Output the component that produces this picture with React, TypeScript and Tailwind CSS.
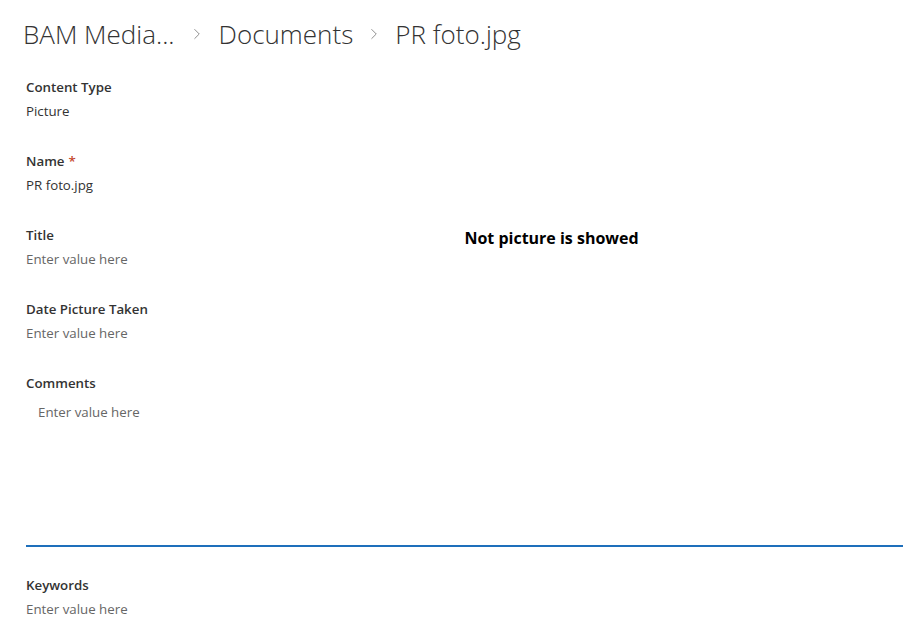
import { ChevronRight } from "lucide-react";

const fields = [
  { label: "Content Type", value: "Picture", placeholder: false },
  { label: "Name", value: "PR foto.jpg", placeholder: false, required: true },
  { label: "Title", value: "Enter value here", placeholder: true },
  { label: "Date Picture Taken", value: "Enter value here", placeholder: true },
];

function Field({
  label,
  value,
  placeholder,
  required,
}: {
  label: string;
  value: string;
  placeholder?: boolean;
  required?: boolean;
}) {
  return (
    <div className="mb-[30px]">
      <div className="text-[13.3px] leading-[20px] font-semibold text-[#333]">
        {label}
        {required && <span className="text-[#c4462a] ml-1">*</span>}
      </div>
      <div
        className={`mt-[4px] text-[13.3px] leading-[20px] ${placeholder ? "text-[#666]" : "text-[#333]"}`}
      >
        {value}
      </div>
    </div>
  );
}

export default function App() {
  return (
    <div className="min-h-[624px] bg-white font-['Open_Sans',sans-serif] text-[#333] overflow-hidden">
      {/* Breadcrumb */}
      <div className="flex items-center pl-[23px] pt-[14px] h-[54px] text-[26px] leading-[36px] font-light text-[#333]">
        <span>BAM Media...</span>
        <ChevronRight className="w-[18px] h-[18px] mx-[13px] text-[#777]" strokeWidth={1.1} />
        <span>Documents</span>
        <ChevronRight className="w-[18px] h-[18px] mx-[12px] text-[#777]" strokeWidth={1.1} />
        <span>PR foto.jpg</span>
      </div>

      <div className="flex pt-[23px]">
        <div className="w-[200px] pl-[26px] shrink-0">
          {fields.map((f) => (
            <Field key={f.label} {...f} />
          ))}
          <div className="text-[13.3px] leading-[20px] font-semibold text-[#333]">Comments</div>
          <div className="mt-[8px] h-[144px] pl-[12px] pt-[1px] text-[13.3px] leading-[20px] text-[#666] whitespace-nowrap">
            Enter value here
          </div>
        </div>
        <div className="flex-1 flex justify-center pt-[151px]">
          <div className="text-[16px] leading-[20px] font-bold text-black">Not picture is showed</div>
        </div>
      </div>

      <div className="ml-[26px] border-t-2 border-[#1e6fbb]" />

      <div className="pl-[26px] pt-[28px]">
        <div className="text-[13.3px] leading-[20px] font-semibold text-[#333]">Keywords</div>
        <div className="mt-[4px] text-[13.3px] leading-[20px] text-[#666]">Enter value here</div>
      </div>
    </div>
  );
}
